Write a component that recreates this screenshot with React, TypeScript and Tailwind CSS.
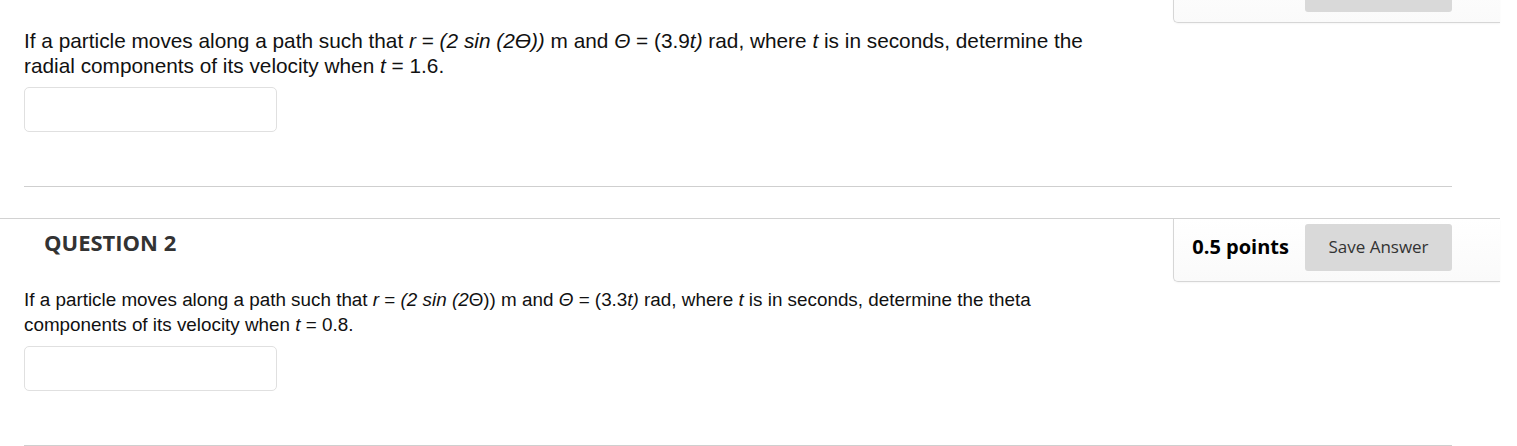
import React from 'react'

interface QuestionProps {
  number: number
  points: string
  textSize: string
  className?: string
  children: React.ReactNode
}

function QuestionBlock({ number, points, textSize, className, children }: QuestionProps) {
  return (
    <div className={`w-[1500px] ${className ?? ''}`}>
      {/* Header: title + points card */}
      <div className="flex justify-between border-t border-[#d2d2d2]">
        <h2 className="pl-[44px] pt-[9px] font-['Open_Sans',sans-serif] text-[22px] leading-[28px] font-bold text-[#333]">
          QUESTION {number}
        </h2>
        <div className="flex w-[327px] items-center justify-end gap-4 rounded-bl-[5px] border-b border-l border-[#d6d6d6] bg-gradient-to-b from-white to-[#fafafa] pt-[5px] pb-[10px] pr-12 shadow-[0_1px_2px_rgba(0,0,0,0.04)]">
          <span className="mb-[2px] font-['Open_Sans',sans-serif] text-[20px] font-bold text-black">{points}</span>
          <button className="h-[47px] w-[147px] rounded-[3px] bg-[#d9d9d9] pb-[1px] font-['Open_Sans',sans-serif] text-[17px] text-[#333]">
            Save Answer
          </button>
        </div>
      </div>

      {/* Body */}
      <div className="pl-6 pr-12">
        <p className={`max-w-[1084px] pt-[5px] font-['Liberation_Sans',Arial,sans-serif] leading-[25px] text-[#111] ${textSize}`}>
          {children}
        </p>
        <input
          type="text"
          className="mt-[9px] block h-[45px] w-[253px] rounded-[5px] border border-[#e0e0e0] bg-white"
        />
        <hr className="mt-[54px] border-t border-[#cfcfcf]" />
      </div>
    </div>
  )
}

export default function App() {
  return (
    <div className="h-[446px] overflow-hidden bg-white">
      <QuestionBlock number={1} points="0.5 points" textSize="text-[20.8px]" className="-mt-[41px]">
        If a particle moves along a path such that <i>r</i> = <i>(2 sin (2ϴ))</i> m and <i>Θ</i> = (3.9<i>t)</i> rad,
        where <i>t</i> is in seconds, determine the radial components of its velocity when <i>t</i> = 1.6.
      </QuestionBlock>
      <QuestionBlock number={2} points="0.5 points" textSize="text-[18.85px]" className="mt-[31px]">
        If a particle moves along a path such that <i>r</i> = <i>(2 sin (2</i>Θ)) m and <i>Θ</i> = (3.3<i>t)</i> rad,
        where <i>t</i> is in seconds, determine the theta components of its velocity when <i>t</i> = 0.8.
      </QuestionBlock>
    </div>
  )
}
